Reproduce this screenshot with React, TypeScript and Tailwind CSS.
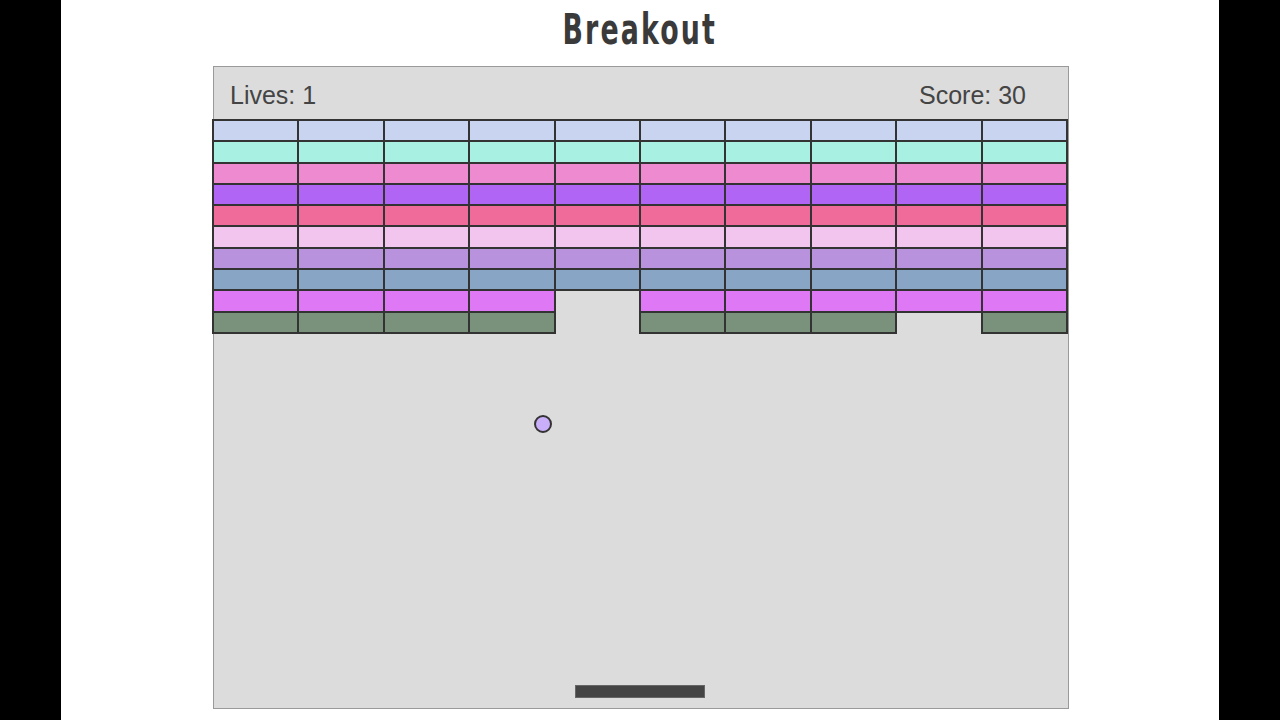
import React from "react";

const ROWS = [
  "bg-[#c8d4f0]",
  "bg-[#a8f0e2]",
  "bg-[#ee8ad0]",
  "bg-[#b065f5]",
  "bg-[#f06a9a]",
  "bg-[#f1c5ee]",
  "bg-[#b892dc]",
  "bg-[#88a5c5]",
  "bg-[#de78f5]",
  "bg-[#7a917c]",
];

const MISSING = new Set(["8-4", "9-4", "9-8"]);

export default function App() {
  return (
    <div className="w-[1280px] h-[720px] bg-black flex justify-center overflow-hidden">
      <div className="w-[1158px] h-[720px] bg-white flex flex-col items-center pl-[2px]">
        <div className="h-[66px] w-full flex items-center justify-center pb-[7px] pr-[2px]">
          <h1
            className="text-[42px] leading-none font-bold text-[#3a3a3a] tracking-[3px] scale-x-[0.71]"
            style={{ fontFamily: '"Liberation Sans Narrow", "DejaVu Sans Condensed", "Liberation Sans", sans-serif' }}
          >
            Breakout
          </h1>
        </div>
        <div className="relative w-[856px] h-[643px] border border-[#9a9a9a] bg-[#dcdcdc] flex flex-col">
          <div
            className="h-[53px] flex items-center justify-between pl-[16px] pr-[42px] pt-[4px] text-[25px] leading-none text-[#444]"
            style={{ fontFamily: '"Liberation Sans", Arial, sans-serif' }}
          >
            <span>Lives: 1</span>
            <span>Score: 30</span>
          </div>
          <div className="grid grid-cols-10 -ml-[1px] w-[854px]">
            {ROWS.map((c, r) =>
              Array.from({ length: 10 }).map((_, i) =>
                MISSING.has(`${r}-${i}`) ? (
                  <div key={`${r}-${i}`} className="h-[21.3px]" />
                ) : (
                  <div
                    key={`${r}-${i}`}
                    className={`h-[21.3px] border border-[#333] outline outline-1 outline-[#333] ${c}`}
                  />
                )
              )
            )}
          </div>
          <div className="flex-1" />
          <div className="flex justify-center mb-[10px] pr-[2px]">
            <div className="w-[130px] h-[13px] bg-[#444] border border-[#666]" />
          </div>
          <div className="absolute left-[320px] top-[348px] w-[18px] h-[18px] rounded-full bg-[#c9aefa] border-2 border-[#333]" />
        </div>
      </div>
    </div>
  );
}
